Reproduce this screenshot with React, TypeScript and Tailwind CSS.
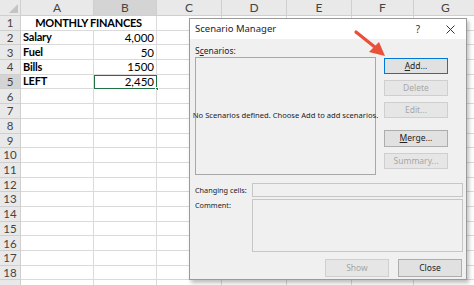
import React from "react";

const cols = [
  { k: "A", w: 73 },
  { k: "B", w: 63 },
  { k: "C", w: 65 },
  { k: "D", w: 65 },
  { k: "E", w: 65 },
  { k: "F", w: 62 },
  { k: "G", w: 64 },
];

const data: Record<number, { a?: string; b?: string; title?: boolean }> = {
  1: { title: true },
  2: { a: "Salary", b: "4,000" },
  3: { a: "Fuel", b: "50" },
  4: { a: "Bills", b: "1500" },
  5: { a: "LEFT", b: "2,450" },
};

function Btn({ children, disabled, primary, className = "" }: { children: React.ReactNode; disabled?: boolean; primary?: boolean; className?: string }) {
  return (
    <div
      className={
        "flex items-center justify-center border text-[8.5px] " +
        (primary
          ? "border-[#0078d7] bg-[#e1e1e1] text-[#222] "
          : disabled
          ? "border-[#cfcfcf] bg-[#e6e6e6] text-[#a6a6a6] "
          : "border-[#adadad] bg-[#e1e1e1] text-[#222] ") +
        className
      }
    >
      {children}
    </div>
  );
}

export default function App() {
  const rows = Array.from({ length: 19 }, (_, i) => i + 1);
  return (
    <div className="relative w-[474px] h-[285px] overflow-hidden bg-white" style={{ fontFamily: "Lato, 'Open Sans', sans-serif" }}>
      {/* header row */}
      <div className="flex h-[16px] bg-[#e9e9e9] border-b border-[#cfcfcf]">
        <div className="relative w-[21px] shrink-0 border-r border-[#cfcfcf]">
          <svg className="absolute right-[2px] bottom-[2px]" width="9" height="9" viewBox="0 0 9 9">
            <polygon points="9,0 9,9 0,9" fill="#c4c4c4" />
          </svg>
        </div>
        {cols.map((c) => (
          <div
            key={c.k}
            style={{ width: c.w }}
            className={
              "shrink-0 flex items-center justify-center text-[12px] border-r border-[#cfcfcf] text-[#444] " +
              (c.k === "B" ? "bg-[#d4d4d4]" : "")
            }
          >
            {c.k}
          </div>
        ))}
      </div>
      {rows.map((r) => {
        const d = data[r] || {};
        return (
          <div key={r} className="flex h-[14.7px]">
            <div
              className={
                "w-[21px] shrink-0 flex items-center justify-center text-[11.5px] text-[#444] border-r border-b border-[#cfcfcf] " +
                (r === 5 ? "bg-[#d4d4d4]" : "bg-[#e9e9e9]")
              }
            >
              {r < 19 ? r : ""}
            </div>
            {d.title ? (
              <div style={{ width: 136 }} className="shrink-0 flex items-center justify-center text-[11px] tracking-[-0.25px] font-bold text-black border-r border-b border-[#dadada]">
                MONTHLY FINANCES
              </div>
            ) : (
              <>
                <div style={{ width: 73 }} className="shrink-0 flex items-center pl-[2px] text-[11px] tracking-[-0.2px] font-bold text-black border-r border-b border-[#dadada]">
                  {d.a}
                </div>
                <div
                  style={{ width: 63 }}
                  className={
                    "relative shrink-0 flex items-center justify-end pr-[2px] text-[11.5px] text-black border-r border-b " +
                    (r === 5 ? "border-[#217346] outline outline-1 outline-[#217346] -outline-offset-1" : "border-[#dadada]")
                  }
                >
                  {d.b}
                  {r === 5 && <div className="absolute right-[-3px] bottom-[-3px] w-[4px] h-[4px] bg-[#217346] border border-white" />}
                </div>
              </>
            )}
            {cols.slice(2).map((c) => (
              <div key={c.k} style={{ width: c.w }} className="shrink-0 border-r border-b border-[#dadada]" />
            ))}
          </div>
        );
      })}

      {/* Dialog */}
      <div
        className="absolute left-[189px] top-[18px] w-[278px] h-[262px] flex flex-col border border-[#9a9a9a] bg-[#f0f0f0] shadow-[2px_3px_4px_rgba(0,0,0,0.25)]"
        style={{ fontFamily: "'Noto Sans', 'Open Sans', sans-serif" }}
      >
        <div className="h-[20px] shrink-0 bg-white flex items-center pl-[5px] pr-[8px] text-[9.5px] text-[#222]">
          <span>Scenario Manager</span>
          <span className="ml-auto mr-[26px] text-[10px] text-[#333]">?</span>
          <svg width="9" height="9" viewBox="0 0 9 9" className="mr-[3px]">
            <path d="M0.5 0.5 L8.5 8.5 M8.5 0.5 L0.5 8.5" stroke="#333" strokeWidth="1" />
          </svg>
        </div>
        <div className="flex flex-col pl-[5px] pr-[3px] pt-[5px]">
          <div className="flex">
            <div className="flex flex-col w-[181px]">
              <div className="h-[13px] text-[8.5px] text-[#222] leading-[13px]">
                S<u>c</u>enarios:
              </div>
              <div className="h-[118px] border border-[#a8a8a8] bg-[#f0f0f0] flex items-center justify-center text-[7.6px] text-[#222] whitespace-nowrap">
                No Scenarios defined. Choose Add to add scenarios.
              </div>
            </div>
            <div className="ml-[8px] w-[64px] flex flex-col pt-[14px]">
              <Btn primary className="h-[16px]">
                <u>A</u>dd...
              </Btn>
              <Btn disabled className="h-[16px] mt-[6px]">Delete</Btn>
              <Btn disabled className="h-[16px] mt-[6px]">Edit...</Btn>
              <Btn className="h-[17px] mt-[12px]">
                <u>M</u>erge...
              </Btn>
              <Btn disabled className="h-[16px] mt-[6px]">Summary...</Btn>
            </div>
          </div>
          <div className="flex items-center mt-[8px] h-[14px]">
            <div className="w-[57px] text-[7.3px] text-[#222] whitespace-nowrap">Changing cells:</div>
            <div className="w-[211px] h-[14px] border border-[#c6c6c6] bg-[#f0f0f0]" />
          </div>
          <div className="flex mt-[2px]">
            <div className="w-[57px] text-[7.3px] text-[#222] leading-[12px]">Comment:</div>
            <div className="w-[211px] h-[53px] border border-[#c6c6c6] bg-[#f0f0f0]" />
          </div>
          <div className="flex justify-end mt-[7px] pr-[1px]">
            <Btn disabled className="w-[64px] h-[18px]">Show</Btn>
            <Btn className="w-[64px] h-[18px] ml-[9px]">Close</Btn>
          </div>
        </div>
      </div>

      {/* red arrow */}
      <svg className="absolute left-[352px] top-[28px]" width="36" height="32" viewBox="0 0 36 32">
        <path d="M4 4 L24 20" stroke="#e8503a" strokeWidth="3.2" strokeLinecap="round" />
        <polygon points="33,28 17,24 27,14" fill="#e8503a" />
      </svg>
    </div>
  );
}
